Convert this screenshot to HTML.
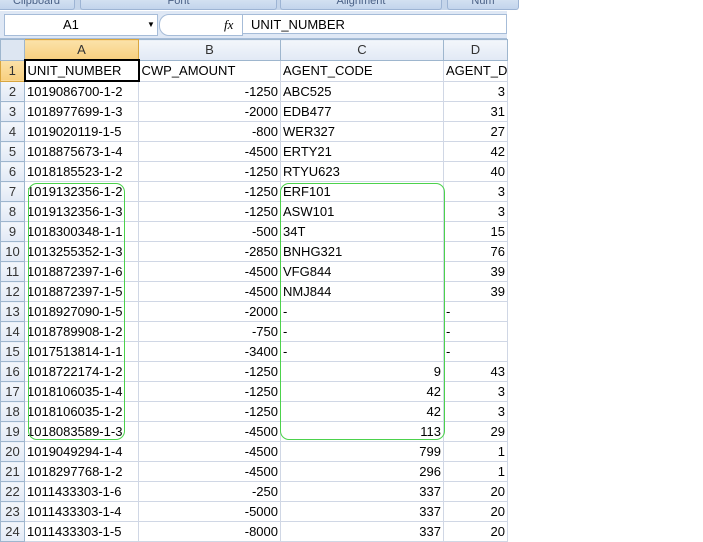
<!DOCTYPE html>
<html><head><style>
body{margin:0;width:703px;height:534px;overflow:hidden;background:#fff;font-family:"Liberation Sans",sans-serif;font-size:13px;position:relative}
.abs{position:absolute}
.rib{top:0;left:0;width:507px;height:10px;background:#c5d5ea}
.grp{position:absolute;top:-4px;height:13px;background:linear-gradient(#dbe6f4,#c2d4ec);border:1px solid #9db4d4;border-top:none;border-radius:0 0 3px 3px;color:#4a6186;font-size:11px;text-align:center;line-height:10px;overflow:hidden}
.fb{top:11px;left:0;width:507px;height:27px;background:#dfe8f5;border-bottom:1px solid #a6bcd8}
table{position:absolute;top:39px;left:0;border-collapse:collapse;table-layout:fixed;width:507px;font-size:13px}
td{height:20px;border:1px solid #d0d7e5;padding:0 2px;white-space:nowrap;overflow:hidden;line-height:19px;box-sizing:border-box}
td.h{background:linear-gradient(#f3f6fb,#e1e9f5);border-color:#9eb6ce;text-align:center;color:#333}
td.hs{background:linear-gradient(#fbe2a9,#f8cf7f);border-color:#d9a63f}
td.r{text-align:right}
.g{position:absolute;border:1px solid #4cd24c;border-radius:9px}
</style></head><body>
<div class="abs rib"></div>
<div class="grp" style="left:-2px;width:75px">Clipboard</div>
<div class="grp" style="left:80px;width:195px">Font</div>
<div class="grp" style="left:280px;width:160px">Alignment</div>
<div class="grp" style="left:447px;width:70px">Num</div>
<div class="abs fb"></div>
<div class="abs" style="top:14px;left:4px;width:152px;height:20px;background:#fff;border:1px solid #a6bcd8;line-height:20px"><span style="position:absolute;left:58px">A1</span><span style="position:absolute;left:142px;font-size:8px">▼</span></div>
<div class="abs" style="top:14px;left:159px;width:82px;height:20px;background:#fff;border:1px solid #a6bcd8;border-radius:10px 0 0 10px"><i style="position:absolute;left:64px;top:2px;font-family:'Liberation Serif',serif;font-size:13px">fx</i></div>
<div class="abs" style="top:14px;left:242px;width:265px;height:20px;background:#fff;border:1px solid #a6bcd8;line-height:20px;padding-left:8px;box-sizing:border-box">UNIT_NUMBER</div>
<table>
<colgroup><col style="width:24px"><col style="width:114px"><col style="width:142px"><col style="width:163px"><col style="width:64px"></colgroup>
<tr><td class="h" style="background:#dde6f2"></td><td class="h hs">A</td><td class="h">B</td><td class="h">C</td><td class="h">D</td></tr>
<tr><td class="h hs">1</td><td style="border:2px solid #000">UNIT_NUMBER</td><td>CWP_AMOUNT</td><td>AGENT_CODE</td><td>AGENT_DI</td></tr>
<tr><td class="h">2</td><td>1019086700-1-2</td><td class="r">-1250</td><td>ABC525</td><td class="r">3</td></tr>
<tr><td class="h">3</td><td>1018977699-1-3</td><td class="r">-2000</td><td>EDB477</td><td class="r">31</td></tr>
<tr><td class="h">4</td><td>1019020119-1-5</td><td class="r">-800</td><td>WER327</td><td class="r">27</td></tr>
<tr><td class="h">5</td><td>1018875673-1-4</td><td class="r">-4500</td><td>ERTY21</td><td class="r">42</td></tr>
<tr><td class="h">6</td><td>1018185523-1-2</td><td class="r">-1250</td><td>RTYU623</td><td class="r">40</td></tr>
<tr><td class="h">7</td><td>1019132356-1-2</td><td class="r">-1250</td><td>ERF101</td><td class="r">3</td></tr>
<tr><td class="h">8</td><td>1019132356-1-3</td><td class="r">-1250</td><td>ASW101</td><td class="r">3</td></tr>
<tr><td class="h">9</td><td>1018300348-1-1</td><td class="r">-500</td><td>34T</td><td class="r">15</td></tr>
<tr><td class="h">10</td><td>1013255352-1-3</td><td class="r">-2850</td><td>BNHG321</td><td class="r">76</td></tr>
<tr><td class="h">11</td><td>1018872397-1-6</td><td class="r">-4500</td><td>VFG844</td><td class="r">39</td></tr>
<tr><td class="h">12</td><td>1018872397-1-5</td><td class="r">-4500</td><td>NMJ844</td><td class="r">39</td></tr>
<tr><td class="h">13</td><td>1018927090-1-5</td><td class="r">-2000</td><td>-</td><td>-</td></tr>
<tr><td class="h">14</td><td>1018789908-1-2</td><td class="r">-750</td><td>-</td><td>-</td></tr>
<tr><td class="h">15</td><td>1017513814-1-1</td><td class="r">-3400</td><td>-</td><td>-</td></tr>
<tr><td class="h">16</td><td>1018722174-1-2</td><td class="r">-1250</td><td class="r">9</td><td class="r">43</td></tr>
<tr><td class="h">17</td><td>1018106035-1-4</td><td class="r">-1250</td><td class="r">42</td><td class="r">3</td></tr>
<tr><td class="h">18</td><td>1018106035-1-2</td><td class="r">-1250</td><td class="r">42</td><td class="r">3</td></tr>
<tr><td class="h">19</td><td>1018083589-1-3</td><td class="r">-4500</td><td class="r">113</td><td class="r">29</td></tr>
<tr><td class="h">20</td><td>1019049294-1-4</td><td class="r">-4500</td><td class="r">799</td><td class="r">1</td></tr>
<tr><td class="h">21</td><td>1018297768-1-2</td><td class="r">-4500</td><td class="r">296</td><td class="r">1</td></tr>
<tr><td class="h">22</td><td>1011433303-1-6</td><td class="r">-250</td><td class="r">337</td><td class="r">20</td></tr>
<tr><td class="h">23</td><td>1011433303-1-4</td><td class="r">-5000</td><td class="r">337</td><td class="r">20</td></tr>
<tr><td class="h">24</td><td>1011433303-1-5</td><td class="r">-8000</td><td class="r">337</td><td class="r">20</td></tr>
</table>
<div class="g" style="left:28px;top:183px;width:95px;height:255px"></div>
<div class="g" style="left:280px;top:183px;width:163px;height:255px"></div>
</body></html>
